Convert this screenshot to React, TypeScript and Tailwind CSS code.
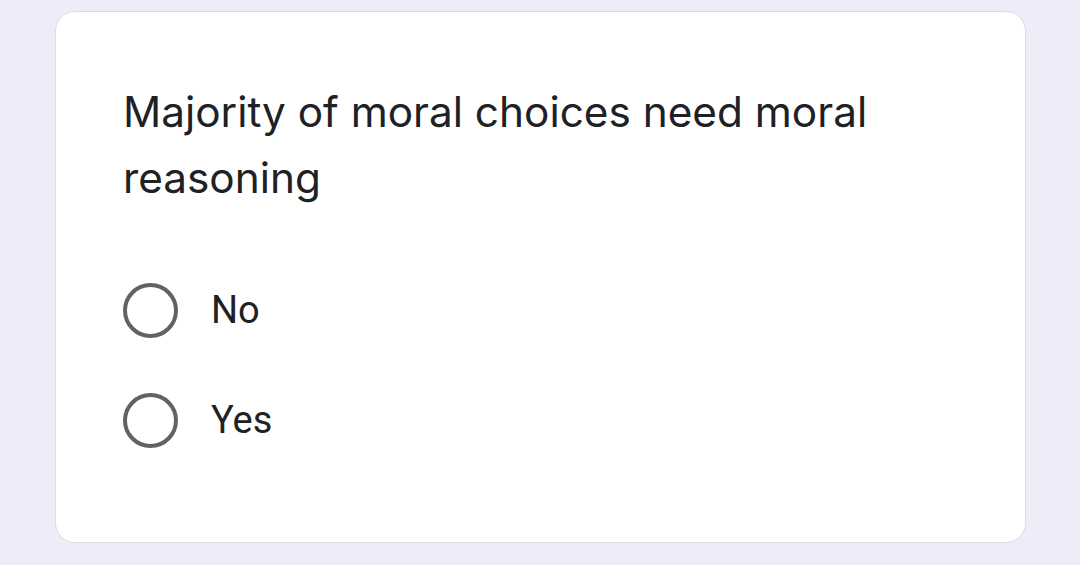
import React from "react";

function Radio() {
  return (
    <div className="w-[55px] h-[55px] rounded-full border-[4px] border-[#5f6368] shrink-0" />
  );
}

export default function App() {
  return (
    <div className="w-[1080px] h-[565px] bg-[#f0ebf8] pt-[11px] pl-[55px]">
      <div className="w-[971px] h-[532px] bg-white rounded-[20px] border border-[#dadce0] pl-[67px] pt-[67px]">
        <div
          className="text-[42.3px] leading-[66px] text-[#202124] w-[800px]"
          style={{ fontFamily: "Inter, 'Open Sans', sans-serif" }}
        >
          Majority of moral choices need moral reasoning
        </div>
        <div className="mt-[72px] flex flex-col gap-[55px]" style={{ fontFamily: "Roboto, sans-serif" }}>
          <div className="flex items-center gap-[33px]">
            <Radio />
            <span className="text-[38px] text-[#202124] leading-[55px]">No</span>
          </div>
          <div className="flex items-center gap-[33px]">
            <Radio />
            <span className="text-[38px] text-[#202124] leading-[55px]">Yes</span>
          </div>
        </div>
      </div>
    </div>
  );
}
